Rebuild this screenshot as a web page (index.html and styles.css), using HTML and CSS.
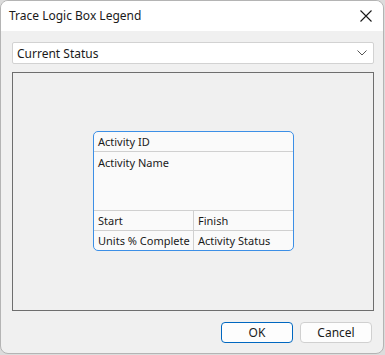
FILE: index.html
```html
<!DOCTYPE html>
<html>
<head>
<meta charset="utf-8" />
<title>Trace Logic Box Legend</title>
<link rel="stylesheet" href="styles.css">
</head>
<body>
<div class="window">
	<div class="titlebar">
		<span class="title">Trace Logic Box Legend</span>
		<svg class="close" width="12" height="12" viewBox="0 0 12 12">
			<path d="M0.5 0.5 L11.5 11.5 M11.5 0.5 L0.5 11.5" stroke="#1a1a1a" stroke-width="1.1" fill="none"/>
		</svg>
	</div>
	<div class="content">
		<div class="combo">
			<span>Current Status</span>
			<svg class="chevron" width="10" height="6" viewBox="0 0 10 6">
				<path d="M0.5 0.5 L5 5 L9.5 0.5" stroke="#555555" stroke-width="1" fill="none"/>
			</svg>
		</div>
		<div class="preview">
			<div class="box">
				<div class="cell row-id">Activity ID</div>
				<div class="cell row-name">Activity Name</div>
				<div class="pair">
					<div class="cell half">Start</div>
					<div class="cell half last">Finish</div>
				</div>
				<div class="pair bottom">
					<div class="cell half">Units % Complete</div>
					<div class="cell half last">Activity Status</div>
				</div>
			</div>
		</div>
		<div class="buttons">
			<div class="button default">OK</div>
			<div class="button">Cancel</div>
		</div>
	</div>
</div>
</body>
</html>
```

FILE: styles.css
```css
*{
	box-sizing: border-box;
	font-family: "Noto Sans", sans-serif;
}

body{
	margin: 0;
	background-color: #dcdcdc;
	width: 385px;
	height: 355px;
	overflow: hidden;
}

.window{
	width: 384px;
	height: 354px;
	background-color: #f0f0f0;
	border: 1px solid #b4b4b4;
	border-radius: 8px;
	overflow: hidden;
	display: flex;
	flex-direction: column;
}

.titlebar{
	height: 30px;
	background-color: #ffffff;
	display: flex;
	align-items: center;
	justify-content: space-between;
	padding: 0 11px 1px 8px;
	flex-shrink: 0;
}

.title{
	font-size: 12px;
	color: #1a1a1a;
}

.close{
	display: block;
}

.content{
	flex: 1;
	padding: 11px 9px 0 11px;
	display: flex;
	flex-direction: column;
}

.combo{
	height: 22px;
	background-color: #ffffff;
	border: 1px solid #d2d2d2;
	border-radius: 2px;
	display: flex;
	align-items: center;
	justify-content: space-between;
	padding: 0 6px 0 4px;
	font-size: 12px;
	color: #1a1a1a;
}

.chevron{
	display: block;
}

.preview{
	margin-top: 8px;
	height: 239px;
	border: 1px solid #6e6e6e;
	display: flex;
	align-items: flex-start;
	padding: 58px 0 0 80px;
}

.box{
	width: 201px;
	height: 120px;
	border: 1px solid #3c8fe6;
	border-radius: 5px;
	background-color: #fafafa;
	display: flex;
	flex-direction: column;
	overflow: hidden;
}

.cell{
	font-size: 11px;
	color: #1a1a1a;
	padding: 1px 4px 0 4px;
	line-height: 18px;
}

.row-id{
	height: 20px;
	border-bottom: 1px solid #d0d0d0;
}

.row-name{
	height: 60px;
	border-bottom: 1px solid #d0d0d0;
	padding-top: 2px;
}

.pair{
	display: flex;
	height: 20px;
	border-bottom: 1px solid #d0d0d0;
}

.pair.bottom{
	border-bottom: none;
	flex: 1;
}

.half{
	width: 100px;
	border-right: 1px solid #d0d0d0;
	white-space: nowrap;
}

.half.last{
	flex: 1;
	border-right: none;
}

.buttons{
	display: flex;
	justify-content: flex-end;
	gap: 7px;
	margin-top: 11px;
	padding-right: 2px;
}

.button{
	width: 72px;
	height: 21px;
	background-color: #fdfdfd;
	border: 1px solid #d0d0d0;
	border-radius: 4px;
	font-size: 12px;
	color: #1a1a1a;
	display: flex;
	align-items: center;
	justify-content: center;
}

.button.default{
	border: 1px solid #0067c0;
}
```
